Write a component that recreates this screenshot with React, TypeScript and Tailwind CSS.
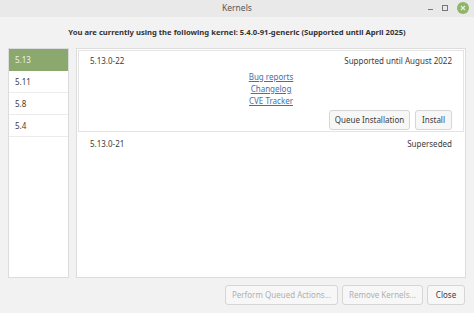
import React from "react";

const font = { fontFamily: '"Noto Sans", "DejaVu Sans", sans-serif' };

function Btn({ children, disabled, className = "" }: { children: React.ReactNode; disabled?: boolean; className?: string }) {
  return (
    <div
      className={`flex h-[20px] items-center justify-center whitespace-nowrap rounded-[3px] border border-[#d6d6d6] bg-[#f7f7f7] px-[2px] text-[8px] leading-none ${
        disabled ? "text-[#b0b0b0]" : "text-[#3c3c3c]"
      } ${className}`}
    >
      {children}
    </div>
  );
}

export default function App() {
  const items = ["5.13", "5.11", "5.8", "5.4"];
  return (
    <div className="flex h-[313px] w-[474px] flex-col overflow-hidden bg-[#f2f2f2]" style={font}>
      {/* Title bar */}
      <div className="relative flex h-[17px] shrink-0 items-center justify-center bg-[#e9e9e9] text-[8.5px] text-[#555]">
        <span>Kernels</span>
        <div className="absolute right-[5px] top-[2px] flex items-center gap-[9px]">
          <span className="mt-[3px] block h-[1px] w-[5px] bg-[#777]" />
          <span className="block h-[6px] w-[6px] border border-[#777]" />
          <span className="flex h-[12px] w-[12px] items-center justify-center rounded-full bg-[#8fb56b]">
            <svg width="6" height="6" viewBox="0 0 6 6">
              <path d="M1 1L5 5M5 1L1 5" stroke="#e6f0dc" strokeWidth="1.2" />
            </svg>
          </span>
        </div>
      </div>

      {/* header text */}
      <div className="flex h-[31px] shrink-0 items-center justify-center whitespace-nowrap text-[7.65px] font-bold text-[#333]">
        You are currently using the following kernel: 5.4.0-91-generic (Supported until April 2025)
      </div>

      {/* main */}
      <div className="flex h-[230px] shrink-0 gap-[7px] px-[8px]">
        {/* left list */}
        <div className="flex w-[61px] flex-col border border-[#dcdcdc] bg-white">
          {items.map((it, i) => (
            <div
              key={it}
              className={`flex h-[22px] shrink-0 items-center pl-[6px] text-[8px] ${
                i === 0 ? "bg-[#8ba86f] text-[#eef3e8]" : "border-b border-[#ececec] text-[#3c3c3c]"
              }`}
            >
              {it}
            </div>
          ))}
        </div>

        {/* right panel */}
        <div className="flex flex-1 flex-col border border-[#dcdcdc] bg-white px-[1px] pt-[1px]">
          <div className="flex h-[82px] flex-col border border-[#e4e4e4] px-[11px] pt-[4px] text-[8px] text-[#3c3c3c]">
            <div className="flex justify-between">
              <span>5.13.0-22</span>
              <span>Supported until August 2022</span>
            </div>
            <div className="mt-[4px] flex flex-col items-center gap-[1px] leading-[11px] text-[#4a6ea9]">
              <span className="underline">Bug reports</span>
              <span className="underline">Changelog</span>
              <span className="underline">CVE Tracker</span>
            </div>
            <div className="mt-[4px] flex justify-end gap-[5px]">
              <Btn className="w-[81px]">Queue Installation</Btn>
              <Btn className="w-[37px]">Install</Btn>
            </div>
          </div>
          <div className="flex justify-between px-[12px] pt-[6px] text-[8px] text-[#3c3c3c]">
            <span>5.13.0-21</span>
            <span>Superseded</span>
          </div>
        </div>
      </div>

      {/* bottom buttons */}
      <div className="flex justify-end gap-[4px] px-[9px] pt-[7px]">
        <Btn disabled className="w-[113px]">Perform Queued Actions...</Btn>
        <Btn disabled className="w-[81px]">Remove Kernels...</Btn>
        <Btn className="w-[38px]">Close</Btn>
      </div>
    </div>
  );
}
